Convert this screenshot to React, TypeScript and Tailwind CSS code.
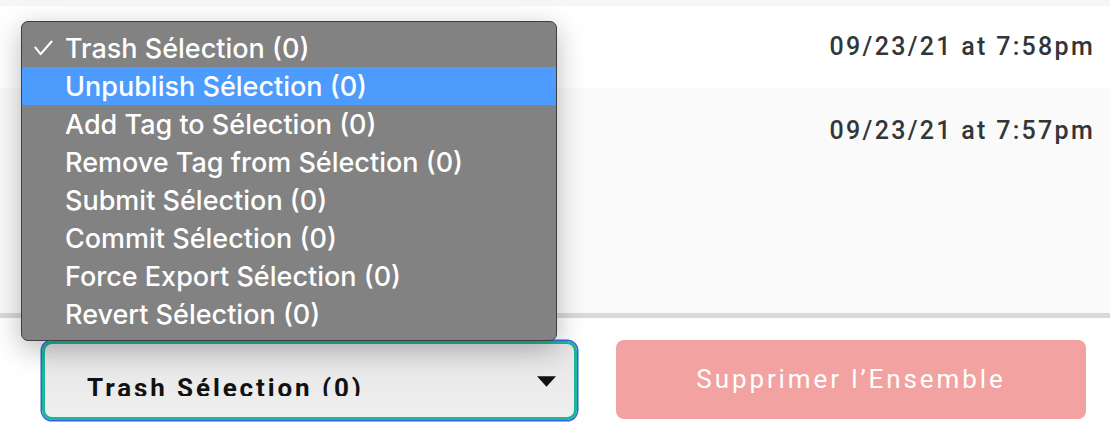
const OPTIONS = [
  "Trash Sélection (0)",
  "Unpublish Sélection (0)",
  "Add Tag to Sélection (0)",
  "Remove Tag from Sélection (0)",
  "Submit Sélection (0)",
  "Commit Sélection (0)",
  "Force Export Sélection (0)",
  "Revert Sélection (0)",
];

function Check() {
  return (
    <svg viewBox="0 0 20 16" className="absolute left-[12px] top-1/2 h-[16px] w-[19px] -translate-y-1/2">
      <path d="M1.5 7.5 L7 14.5 L18.5 1.2" fill="none" stroke="white" strokeWidth="2.2" strokeLinecap="round" strokeLinejoin="round" />
    </svg>
  );
}

function ActionMenu() {
  return (
    <div className="absolute left-[21px] top-[21px] w-[536px] rounded-[7px] border border-[#3f3f3f] bg-[#828282] py-[7px] shadow-[0_8px_28px_rgba(0,0,0,0.28)] font-['Inter',sans-serif]">
      {OPTIONS.map((o, i) => (
        <div
          key={o}
          className={`relative flex h-[38px] items-center pl-[43px] text-[27px] font-medium leading-none text-white ${i === 1 ? "bg-[#4c9bfd]" : ""}`}
        >
          {i === 0 && <Check />}
          {o}
        </div>
      ))}
    </div>
  );
}

export default function App() {
  return (
    <div className="relative h-[436px] w-[1110px] overflow-hidden bg-white font-['Roboto',sans-serif]">
      <div className="h-[6px] bg-[#f6f6f6]" />
      <div className="flex h-[82px] items-center justify-end bg-white pr-[15px]">
        <span className="text-[25px] font-medium tracking-[2.3px] text-[#333638]">09/23/21 at 7:58pm</span>
      </div>
      <div className="flex h-[225px] items-start justify-end bg-[#fafafa] pr-[15px] pt-[24px]">
        <span className="text-[25px] font-medium tracking-[2.3px] text-[#333638]">09/23/21 at 7:57pm</span>
      </div>
      <div className="h-[5px] bg-[#d9d9d9]" />

      <div className="flex items-start gap-[39px] pl-[42px] pt-[23px]">
        <div className="flex h-[79px] w-[535px] items-start justify-between rounded-[10px] border-[3px] border-[#1eb795] bg-gradient-to-b from-[#e6e6e6] to-[#efefef] pl-[42px] pr-[18px] shadow-[0_0_0_1.5px_#2f62e6]">
          <div className="h-[52px] overflow-hidden pt-[29px]">
            <span className="block text-[26px] font-bold leading-[30px] tracking-[2.9px] text-[#111]">Trash Sélection (0)</span>
          </div>
          <svg viewBox="0 0 20 11" className="mt-[32px] h-[11px] w-[19px]">
            <path d="M0 0 H20 L10 11 Z" fill="#111" />
          </svg>
        </div>
        <button className="-mt-[1px] flex h-[79px] w-[470px] items-center justify-center rounded-[8px] bg-[#f2a3a1] text-[26px] tracking-[2.9px] text-white">
          Supprimer l’Ensemble
        </button>
      </div>

      <ActionMenu />
    </div>
  );
}
